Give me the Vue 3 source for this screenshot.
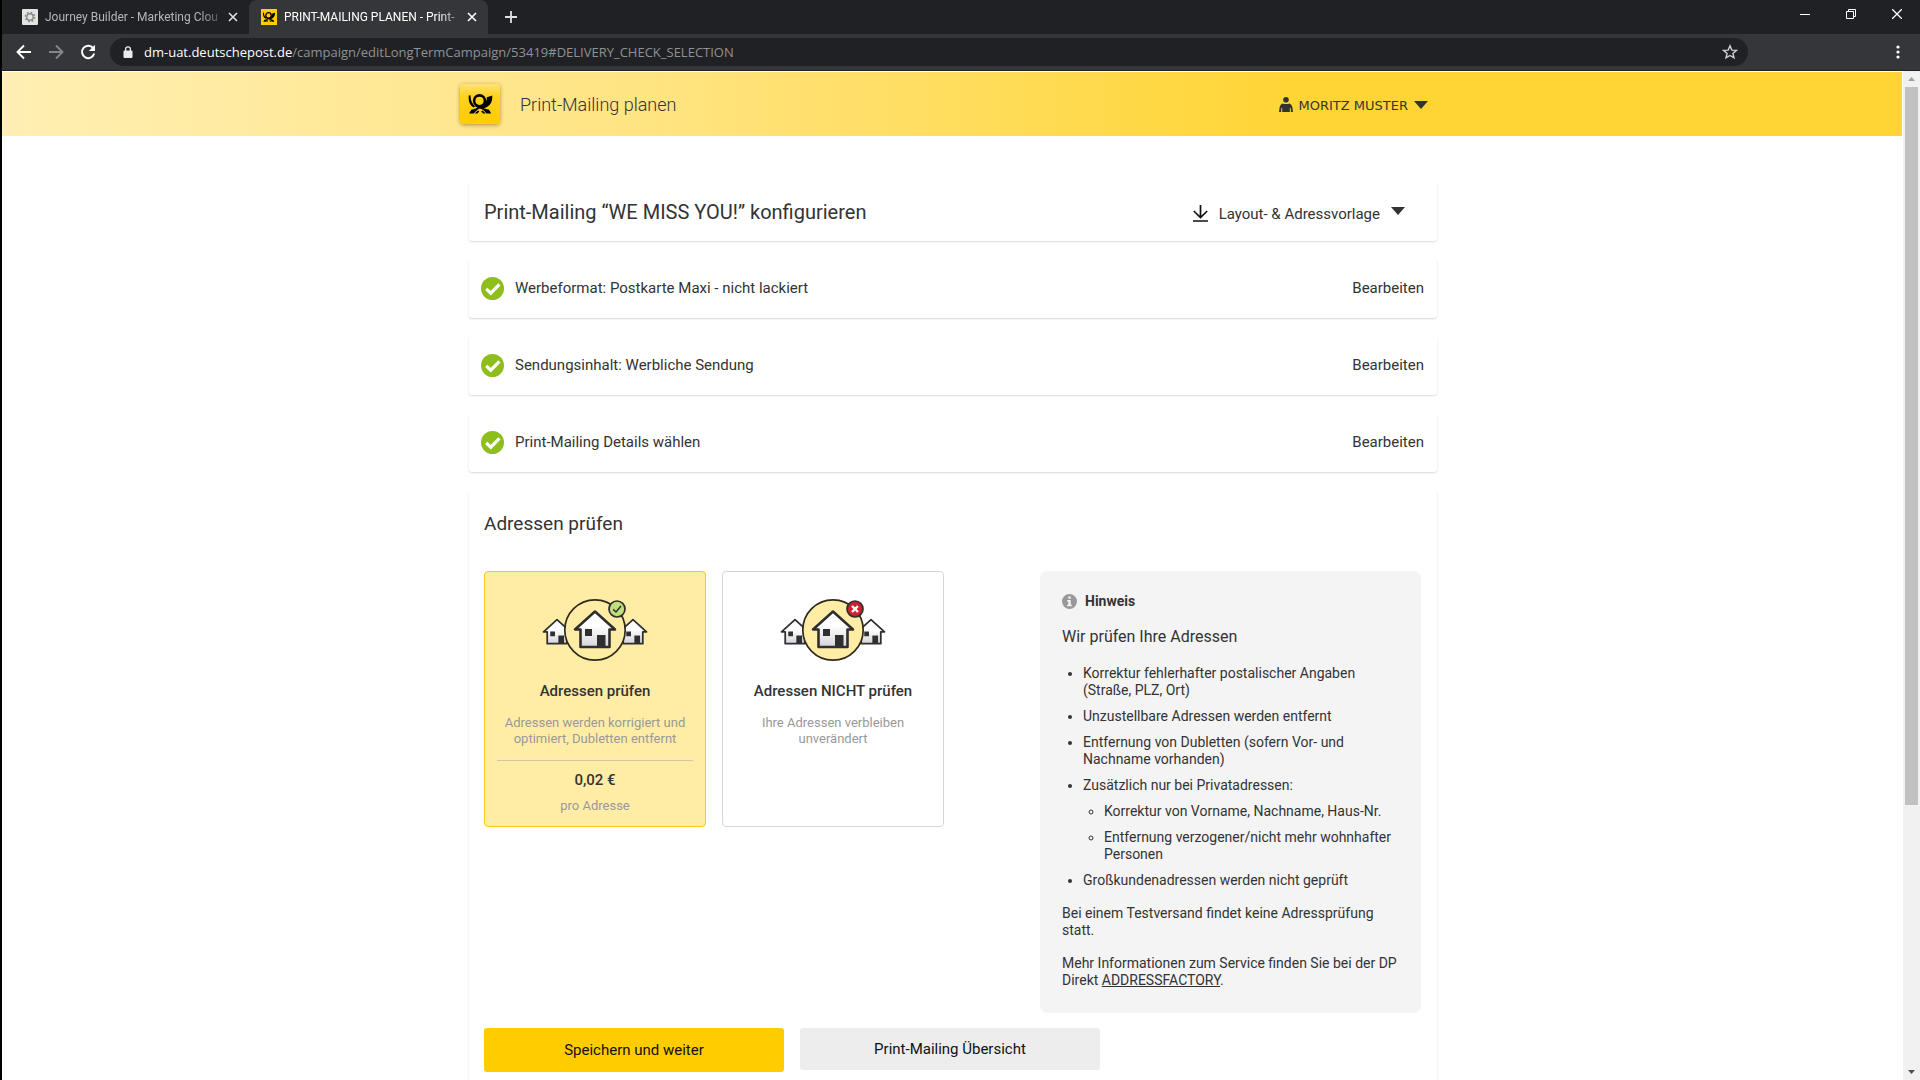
<script setup>
import { ref } from 'vue'

const steps = [
  'Werbeformat: Postkarte Maxi - nicht lackiert',
  'Sendungsinhalt: Werbliche Sendung',
  'Print-Mailing Details wählen',
]

const options = [
  {
    id: 'check',
    title: 'Adressen prüfen',
    text: 'Adressen werden korrigiert und optimiert, Dubletten entfernt',
    price: '0,02 €',
    unit: 'pro Adresse',
  },
  {
    id: 'skip',
    title: 'Adressen NICHT prüfen',
    text: 'Ihre Adressen verbleiben unverändert',
  },
]

const selected = ref('check')
</script>

<template>
  <div class="window">
    <svg class="defs" width="0" height="0" aria-hidden="true">
      <defs>
        <linearGradient id="wall" x1="0" y1="0" x2="0" y2="1">
          <stop offset="0.4" stop-color="#fff" />
          <stop offset="1" stop-color="#d4d4dc" />
        </linearGradient>
        <symbol id="horn" viewBox="0 0 24 20">
          <circle cx="11" cy="6.8" r="5.4" fill="none" stroke="#000" stroke-width="2.6" />
          <path d="M0 1.6 2 1.2C2 6 3.4 9.6 6.6 12.2L5 13.6C1.2 11.2-.6 6.6 0 1.6Z" />
          <path d="M18.4 3.2 24 1.6C24.4 8 21 13.4 14.6 14.4L10 14.2 9.4 12.6C14.8 12.8 18.2 9 18.4 3.2Z" />
          <path d="M6.4 12.6 8.6 12 19 15.6 18 17.2ZM15.6 12.6 13.4 12 4.6 15.6 5.6 17.2Z" />
          <path d="M3 15.6H9L5.4 19.6H.6ZM9.4 16.6 10.8 17.4 8.8 19.6H6.2ZM20.4 15.6H14.4L18 19.6H22.8ZM14 16.6 12.6 17.4 14.6 19.6H17.2Z" />
        </symbol>
        <symbol id="house" viewBox="0 0 44 40">
          <path d="M22 2.5 2 20.5H7.5V38H36.5V20.5H42Z" fill="url(#wall)" stroke="#2f2f2f" stroke-width="2.6" stroke-linejoin="round" />
          <rect x="12" y="20" width="7" height="7" fill="#2f2f2f" />
          <rect x="24" y="26" width="8.5" height="12" fill="#2f2f2f" />
        </symbol>
      </defs>
    </svg>

    <header class="chrome">
      <div class="tabs">
        <div class="tab">
          <svg class="favicon" viewBox="0 0 16 16">
            <rect width="16" height="16" rx="1" fill="#e4e4e4" />
            <circle cx="8" cy="8" r="3.2" fill="none" stroke="#8a8a8a" stroke-width="1.4" />
            <circle cx="8" cy="8" r="4.6" fill="none" stroke="#8a8a8a" stroke-width="1.6" stroke-dasharray="1.8 1.8" />
          </svg>
          <span class="tab-title">Journey Builder - Marketing Clou</span>
          <button class="icon-btn" aria-label="Tab schließen">
            <svg width="10" height="10" viewBox="0 0 10 10"><path d="M1 1 9 9M9 1 1 9" stroke="#dfe1e5" stroke-width="1.6" /></svg>
          </button>
        </div>
        <div class="tab active">
          <svg class="favicon" viewBox="0 0 16 16">
            <rect width="16" height="16" fill="#ffcc00" />
            <use href="#horn" x="2" y="2" width="12" height="12" />
          </svg>
          <span class="tab-title">PRINT-MAILING PLANEN - Print-</span>
          <button class="icon-btn" aria-label="Tab schließen">
            <svg width="10" height="10" viewBox="0 0 10 10"><path d="M1 1 9 9M9 1 1 9" stroke="#fff" stroke-width="1.6" /></svg>
          </button>
        </div>
        <button class="icon-btn new-tab" aria-label="Neuer Tab">
          <svg width="12" height="12" viewBox="0 0 12 12"><path d="M6 0V12M0 6H12" stroke="#dfe1e5" stroke-width="1.8" /></svg>
        </button>
        <div class="win-controls">
          <button class="icon-btn" aria-label="Minimieren">
            <svg width="10" height="10" viewBox="0 0 10 10"><path d="M0 5.5H10" stroke="#fff" /></svg>
          </button>
          <button class="icon-btn" aria-label="Verkleinern">
            <svg width="10" height="10" viewBox="0 0 10 10" fill="none" stroke="#fff"><path d="M.5 2.5H7.5V9.5H.5ZM2.5 2.5V.5H9.5V7.5H7.5" /></svg>
          </button>
          <button class="icon-btn" aria-label="Schließen">
            <svg width="10" height="10" viewBox="0 0 10 10"><path d="M0 0 10 10M10 0 0 10" stroke="#fff" stroke-width="1.3" /></svg>
          </button>
        </div>
      </div>

      <div class="toolbar">
        <button class="icon-btn nav" aria-label="Zurück">
          <svg width="16" height="16" viewBox="0 0 16 16" fill="none" stroke="#fff" stroke-width="1.9"><path d="M15 8H2M8 1.5 1.5 8 8 14.5" /></svg>
        </button>
        <button class="icon-btn nav" aria-label="Vorwärts">
          <svg width="16" height="16" viewBox="0 0 16 16" fill="none" stroke="#85878a" stroke-width="1.9"><path d="M1 8H14M8 1.5 14.5 8 8 14.5" /></svg>
        </button>
        <button class="icon-btn nav" aria-label="Neu laden">
          <svg width="16" height="16" viewBox="0 0 16 16"><path d="M13.2 4.2A6.2 6.2 0 1 0 14.2 9.6" fill="none" stroke="#fff" stroke-width="2" /><path d="M15 .8V7H8.8Z" fill="#fff" /></svg>
        </button>
        <div class="omnibox">
          <svg width="10" height="12" viewBox="0 0 10 12"><rect x="0.5" y="4.5" width="9" height="7.5" rx="1" fill="#e8eaed" /><path d="M2.6 5V3.2A2.4 2.4 0 0 1 7.4 3.2V5" fill="none" stroke="#e8eaed" stroke-width="1.3" /></svg>
          <span class="url"><b>dm-uat.deutschepost.de</b>/campaign/editLongTermCampaign/53419#DELIVERY_CHECK_SELECTION</span>
          <button class="icon-btn" aria-label="Lesezeichen">
            <svg width="16" height="16" viewBox="0 0 16 16"><path d="M8 1.8 9.8 6.1 14.4 6.4 10.9 9.4 12 13.9 8 11.5 4 13.9 5.1 9.4 1.6 6.4 6.2 6.1Z" fill="none" stroke="#cfd1d4" stroke-width="1.4" /></svg>
          </button>
        </div>
        <button class="icon-btn menu" aria-label="Menü">
          <svg width="4" height="14" viewBox="0 0 4 14" fill="#fff"><circle cx="2" cy="2" r="1.6" /><circle cx="2" cy="7" r="1.6" /><circle cx="2" cy="12" r="1.6" /></svg>
        </button>
      </div>
    </header>

    <div class="viewport">
      <div class="page">
        <div class="banner">
          <div class="banner-inner">
            <span class="logo"><svg width="25" height="20" viewBox="0 0 24 20"><use href="#horn" width="24" height="20" /></svg></span>
            <span class="app-name">Print-Mailing planen</span>
            <button class="user">
              <svg width="14" height="16" viewBox="0 0 14 16" fill="#333"><circle cx="7" cy="2.8" r="2.8" /><path d="M3.4 6.4Q7 7.8 10.6 6.4 13 7.2 13.4 10.4L14 15H11.6L11 10.6V15H3V10.6L2.4 15H0L.6 10.4Q1 7.2 3.4 6.4Z" /><path d="M2.7 11V15M11.3 11V15" stroke="#ffd535" stroke-width="0.8" /></svg>
              MORITZ MUSTER
              <svg width="14" height="8" viewBox="0 0 14 8"><path d="M0 0H14L7 8Z" fill="#333" /></svg>
            </button>
          </div>
        </div>

        <main class="content">
          <section class="card title-card">
            <h1>Print-Mailing “WE MISS YOU!” konfigurieren</h1>
            <button class="template">
              <svg width="15" height="17" viewBox="0 0 15 17" fill="none" stroke="#111" stroke-width="1.7"><path d="M7.5 0V12.4M.8 6 7.5 12.6 14.2 6M0 16H15" /></svg>
              <span>Layout- &amp; Adressvorlage</span>
              <svg class="caret" width="14" height="8" viewBox="0 0 14 8"><path d="M0 0H14L7 8Z" fill="#333" /></svg>
            </button>
          </section>

          <section v-for="step in steps" :key="step" class="card step">
            <svg width="23" height="23" viewBox="0 0 23 23"><circle cx="11.5" cy="11.5" r="11.5" fill="#8dbe1c" /><path d="M5.2 11.8 9.8 16.2 18.4 7.4" fill="none" stroke="#fff" stroke-width="3.2" /></svg>
            <span>{{ step }}</span>
            <a href="#">Bearbeiten</a>
          </section>

          <section class="card check">
            <h2>Adressen prüfen</h2>
            <div class="columns">
              <div class="options">
                <label v-for="o in options" :key="o.id" class="option" :class="{ chosen: selected === o.id }">
                  <input v-model="selected" type="radio" name="addressCheck" :value="o.id" />
                  <svg class="picture" width="106" height="64" viewBox="0 0 106 64">
                    <use href="#house" x="0" y="20" width="30" height="27" />
                    <use href="#house" x="76" y="20" width="30" height="27" />
                    <circle cx="53" cy="32" r="30.2" fill="#ffeda6" stroke="#2f2a1c" stroke-width="1.7" />
                    <use href="#house" x="31" y="11" width="44" height="40" />
                    <g v-if="o.id === 'check'">
                      <circle cx="75" cy="11" r="8" fill="#c0e080" stroke="#2f2f2f" stroke-width="1.7" />
                      <path d="M71.2 11.4 74 14 79 8" fill="none" stroke="#2f2f2f" stroke-width="1.5" />
                    </g>
                    <g v-else>
                      <circle cx="75" cy="11" r="8" fill="#d0202f" stroke="#2f2f2f" stroke-width="1.7" />
                      <path d="M72 8 78 14M78 8 72 14" stroke="#fff" stroke-width="2.4" />
                    </g>
                  </svg>
                  <strong>{{ o.title }}</strong>
                  <span class="note">{{ o.text }}</span>
                  <template v-if="o.price">
                    <span class="rule"></span>
                    <strong class="price">{{ o.price }}</strong>
                    <span class="note unit">{{ o.unit }}</span>
                  </template>
                </label>
              </div>

              <aside class="hint">
                <h3>
                  <svg width="15" height="15" viewBox="0 0 15 15"><circle cx="7.5" cy="7.5" r="7.5" fill="#999" /><path d="M6.3 2.6H8.7V4.8H6.3ZM5.2 6H8.7V10.8H9.8V12.2H5.2V10.8H6.3V7.4H5.2Z" fill="#f4f4f4" /></svg>
                  Hinweis
                </h3>
                <p class="lead">Wir prüfen Ihre Adressen</p>
                <ul>
                  <li>Korrektur fehlerhafter postalischer Angaben (Straße, PLZ, Ort)</li>
                  <li>Unzustellbare Adressen werden entfernt</li>
                  <li>Entfernung von Dubletten (sofern Vor- und Nachname vorhanden)</li>
                  <li>
                    Zusätzlich nur bei Privatadressen:
                    <ul>
                      <li>Korrektur von Vorname, Nachname, Haus-Nr.</li>
                      <li>Entfernung verzogener/nicht mehr wohnhafter Personen</li>
                    </ul>
                  </li>
                  <li>Großkundenadressen werden nicht geprüft</li>
                </ul>
                <p>Bei einem Testversand findet keine Adressprüfung statt.</p>
                <p>Mehr Informationen zum Service finden Sie bei der DP Direkt <a href="#">ADDRESSFACTORY</a>.</p>
              </aside>
            </div>

            <div class="actions">
              <button class="primary">Speichern und weiter</button>
              <button class="secondary">Print-Mailing Übersicht</button>
            </div>
          </section>
        </main>
      </div>

      <div class="scrollbar" aria-hidden="true">
        <svg width="17" height="16" viewBox="0 0 17 16"><path d="M5 10H12L8.5 6Z" fill="#a0a0a0" /></svg>
        <div class="track"><div class="thumb"></div></div>
        <svg width="17" height="16" viewBox="0 0 17 16"><path d="M5 6H12L8.5 10Z" fill="#505050" /></svg>
      </div>
    </div>
  </div>
</template>

<style>
body {
  margin: 0;
  overflow: hidden;
}
</style>

<style scoped>
.window {
  display: flex;
  flex-direction: column;
  height: 100vh;
  box-sizing: border-box;
  border-left: 2px solid #000;
  background: #fff;
  color: #333;
  font-family: Roboto, "Noto Sans", sans-serif;
  font-size: 15px;
}

.defs {
  position: absolute;
}

button {
  border: 0;
  padding: 0;
  background: none;
  color: inherit;
  font: inherit;
  cursor: pointer;
}

a {
  color: inherit;
}

svg {
  display: block;
  flex: none;
}

h1, h2, h3, p, ul {
  margin: 0;
  font-weight: 400;
}

/* Browser frame */
.chrome {
  flex: none;
  background: #35363a;
  border-bottom: 1px solid #202124;
}

.icon-btn {
  display: flex;
  align-items: center;
  justify-content: center;
}

.tabs {
  display: flex;
  align-items: center;
  height: 34px;
  padding-left: 8px;
  background: #202124;
}

.tab {
  display: flex;
  align-items: center;
  gap: 7px;
  width: 239px;
  height: 34px;
  box-sizing: border-box;
  padding: 0 11px 0 12px;
  color: #b4b6b9;
  font-size: 12px;
}

.tab.active {
  background: #35363a;
  border-radius: 8px 8px 0 0;
  color: #fff;
}

.favicon {
  width: 16px;
  height: 16px;
}

.tab-title {
  flex: 1;
  white-space: nowrap;
  mask-image: linear-gradient(90deg, #000 88%, transparent 104%);
}

.new-tab {
  margin-left: 17px;
}

.win-controls {
  display: flex;
  gap: 36px;
  height: 28px;
  margin: 0 18px 6px auto;
}

.toolbar {
  display: flex;
  align-items: center;
  height: 36px;
  padding: 0 20px 0 14px;
}

.nav {
  width: 16px;
  margin-right: 16px;
}

.omnibox {
  display: flex;
  flex: 1;
  align-items: center;
  gap: 11px;
  height: 28px;
  margin: 0 148px 0 -2px;
  padding: 0 10px 0 13px;
  border-radius: 14px;
  background: #202124;
  color: #8f9195;
  font-family: "Open Sans", "Noto Sans", sans-serif;
  font-size: 13px;
}

.url {
  flex: 1;
}

.url b {
  color: #fff;
  font-weight: 400;
}

/* Page area */
.viewport {
  display: flex;
  flex: 1;
  min-height: 0;
}

.page {
  flex: 1;
  overflow: hidden;
  padding: 1px 1px 0 0;
}

.banner {
  background: linear-gradient(90deg, #ffefb3, #ffe482 34%, #ffd535 68%);
}

.banner-inner {
  display: flex;
  align-items: center;
  max-width: 968px;
  height: 64px;
  margin: 0 auto;
  padding: 0 16px 0 0;
}

.logo {
  display: flex;
  align-items: center;
  justify-content: center;
  width: 40px;
  height: 40px;
  border-radius: 4px;
  background: linear-gradient(#ffe27a, #ffd21f 30%, #ffcc00);
  box-shadow: 0 1px 4px rgba(120, 90, 0, 0.6);
}

.app-name {
  margin-left: 20px;
  font-size: 18px;
  font-weight: 300;
}

.user {
  display: flex;
  align-items: center;
  gap: 6px;
  margin-left: auto;
  padding-top: 2px;
  font-family: "DejaVu Sans", sans-serif;
  font-size: 13px;
}

.content {
  display: flex;
  flex-direction: column;
  gap: 18px;
  max-width: 968px;
  margin: 46px auto 0;
  padding-left: 2px;
}

.card {
  border-radius: 3px;
  box-shadow: 0 1px 2px rgba(0, 0, 0, 0.15);
}

.title-card,
.step {
  display: flex;
  align-items: center;
  height: 59px;
  box-sizing: border-box;
}

.title-card {
  padding: 0 32px 0 15px;
}

h1 {
  font-size: 20px;
}

.template {
  display: flex;
  align-items: center;
  gap: 11px;
  margin: 4px 0 0 auto;
}

.caret {
  margin-bottom: 6px;
}

.step {
  gap: 11px;
  padding: 0 13px 0 12px;
}

.step span,
.step a {
  padding-bottom: 2px;
}

.step a {
  margin-left: auto;
  text-decoration: none;
}

.check {
  padding: 21px 16px 24px 15px;
}

h2 {
  font-size: 19px;
  line-height: 26px;
}

.columns {
  display: flex;
  align-items: flex-start;
  justify-content: space-between;
  margin-top: 34px;
}

.options {
  display: flex;
  gap: 16px;
}

.option {
  display: flex;
  flex-direction: column;
  align-items: center;
  width: 222px;
  min-height: 256px;
  box-sizing: border-box;
  padding: 26px 12px 12px;
  border: 1px solid #d6d6d6;
  border-radius: 4px;
  text-align: center;
  cursor: pointer;
}

.option.chosen {
  border-color: #f0cc1c;
  background: #ffeda6;
}

.option input {
  position: absolute;
  opacity: 0;
  pointer-events: none;
}

.option strong {
  margin-top: 19px;
  font-size: 15px;
  font-weight: 500;
  line-height: 20px;
}

.note {
  margin-top: 14px;
  color: #999;
  font-size: 13px;
  line-height: 16px;
}

.rule {
  align-self: stretch;
  margin-top: 13px;
  border-top: 1px solid #d2c8a4;
}

.option .price {
  margin-top: 9px;
}

.option .unit {
  margin-top: 8px;
}

.hint {
  width: 381px;
  box-sizing: border-box;
  padding: 21px 22px 24px;
  border-radius: 8px;
  background: #f4f4f4;
  font-size: 14px;
  line-height: 17px;
}

h3 {
  display: flex;
  align-items: center;
  gap: 8px;
  font-size: 14px;
  font-weight: 700;
  line-height: 18px;
}

.lead {
  margin: 17px 0 18px;
  font-size: 16px;
  line-height: 20px;
}

.hint ul {
  padding-left: 21px;
}

.hint li + li,
.hint li ul {
  margin-top: 9px;
}

.hint ul + p,
.hint p + p {
  margin-top: 16px;
}

.actions {
  display: flex;
  align-items: flex-start;
  gap: 16px;
  margin-top: 15px;
}

.actions button {
  width: 300px;
  height: 42px;
  border-radius: 3px;
  background: #ededed;
  color: #111;
}

.actions .primary {
  height: 44px;
  background: #ffcc00;
}

.scrollbar {
  display: flex;
  flex: none;
  flex-direction: column;
  width: 17px;
  background: #f1f1f1;
}

.track {
  flex: 1;
  padding: 0 2px;
}

.thumb {
  height: 73.5%;
  background: #c1c1c1;
}
</style>
